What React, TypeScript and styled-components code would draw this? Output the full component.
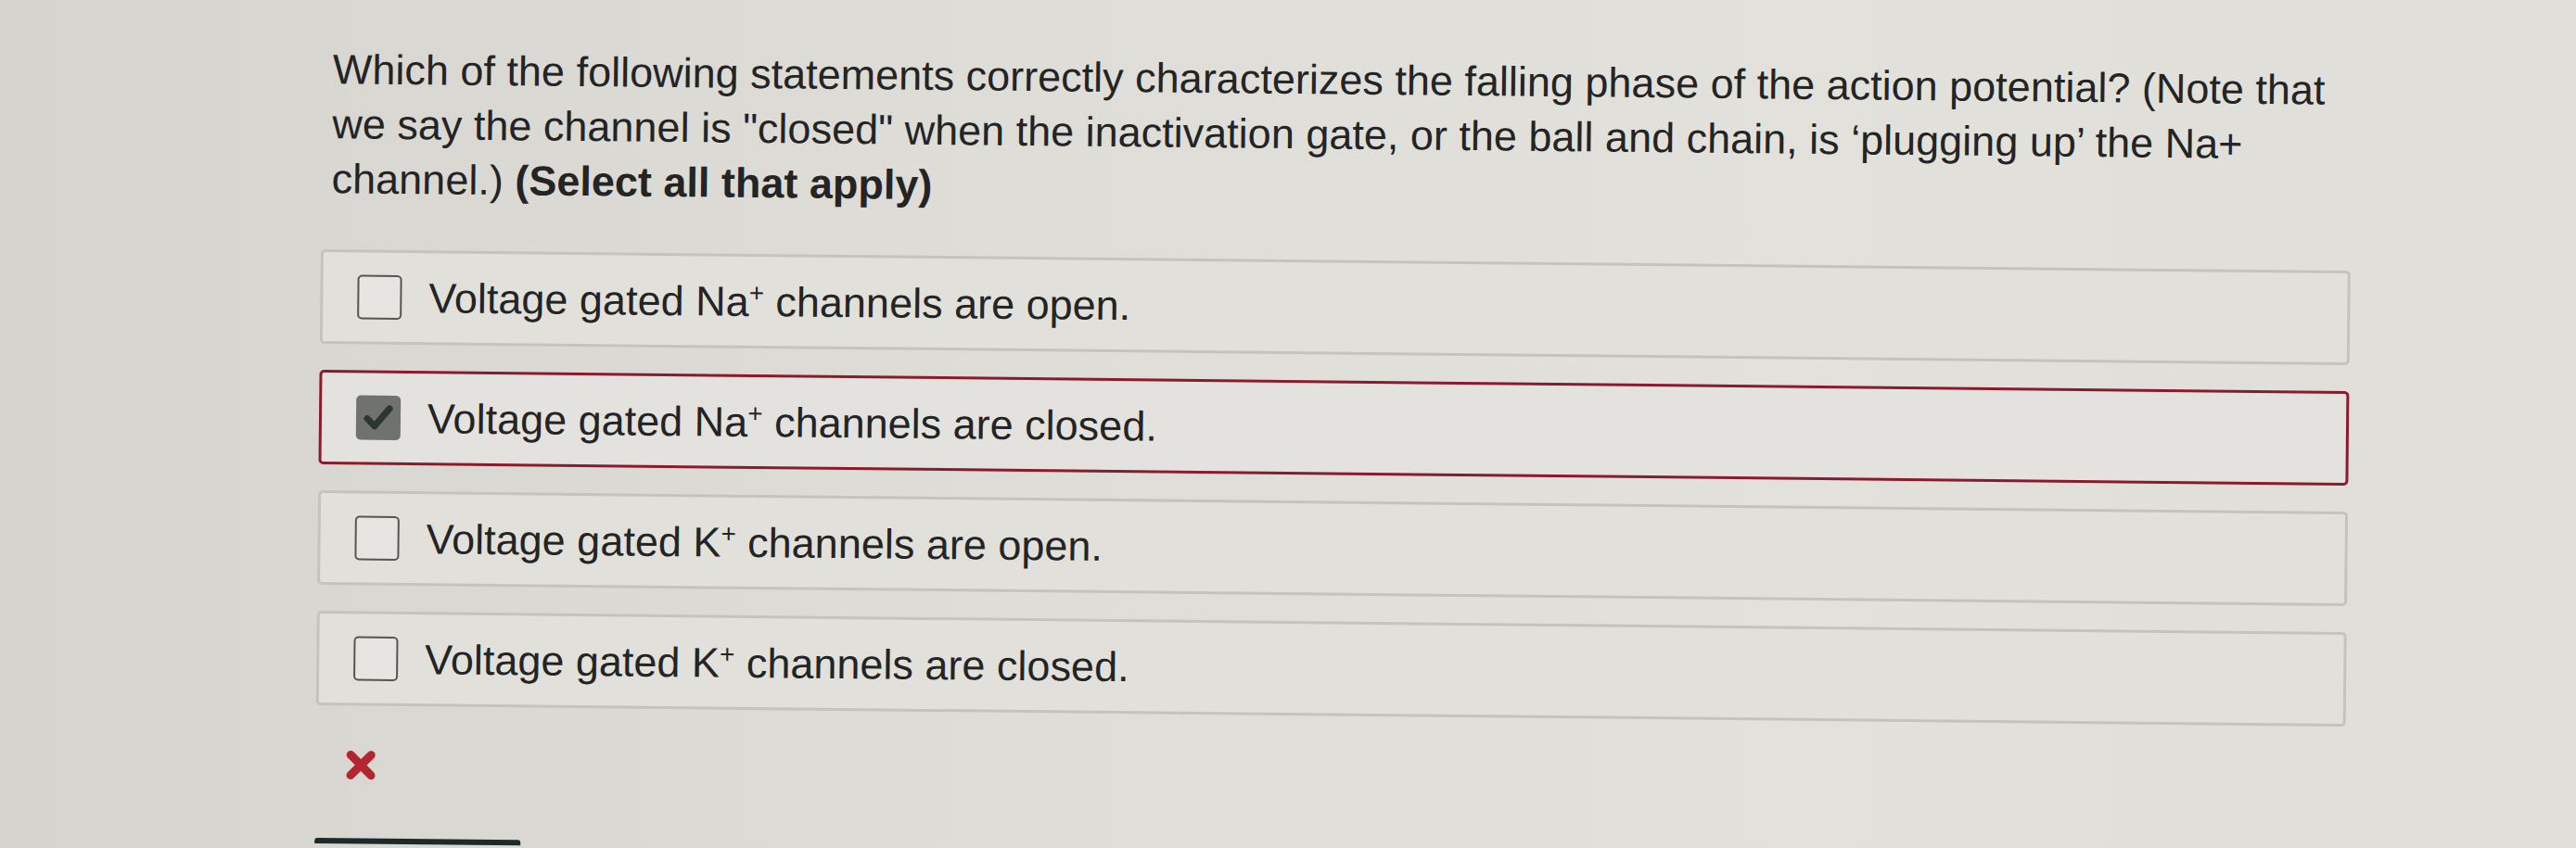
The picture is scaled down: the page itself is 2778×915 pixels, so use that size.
import React from 'react'
import styled, { createGlobalStyle } from 'styled-components'

const GlobalStyle = createGlobalStyle`
  html, body {
    margin: 0;
    padding: 0;
    width: 2778px;
    height: 915px;
    overflow: hidden;
    background: linear-gradient(90deg, #d5d4cf 0%, #dddcd7 35%, #e2e1dc 70%, #dfded9 100%);
  }
  * {
    box-sizing: border-box;
  }
`

const Page = styled.div`
  width: 2778px;
  height: 915px;
  padding: 56px 245px 0 344px;
  font-family: 'Liberation Sans', Arial, sans-serif;
  color: #242424;
  transform: rotate(0.6deg);
  transform-origin: 1389px 457px;
`

const Question = styled.div`
  font-size: 45px;
  line-height: 59px;
  padding-left: 11px;
  margin-bottom: 47px;

  b {
    font-weight: 700;
  }
`

const OptionList = styled.div`
  display: flex;
  flex-direction: column;
  gap: 28px;
`

const Option = styled.div<{ selected?: boolean }>`
  height: 102px;
  display: flex;
  align-items: center;
  gap: 29px;
  padding-left: 37px;
  border: 3px solid ${({ selected }) => (selected ? '#8a1b2d' : '#c4c3be')};
  border-radius: 5px;
  background: ${({ selected }) => (selected ? '#e3e2de' : '#e1e0db')};
`

const Check = styled.div<{ checked?: boolean }>`
  width: 48px;
  height: 48px;
  flex-shrink: 0;
  border-radius: 5px;
  border: ${({ checked }) => (checked ? 'none' : '2px solid #555553')};
  background: ${({ checked }) => (checked ? '#6f726f' : '#e6e5e1')};
  display: flex;
  align-items: center;
  justify-content: center;
`

const Label = styled.span`
  font-size: 45px;
  line-height: 1;

  sup {
    font-size: 0.62em;
    line-height: 0;
    vertical-align: 0.55em;
  }
`

const Feedback = styled.div`
  margin: 46px 0 0 31px;
  width: 36px;
  height: 36px;
`

// only the top edge of the submit button peeks in at the bottom of the frame
const ActionBar = styled.div`
  margin-top: 61px;
  width: 222px;
  height: 6px;
  border-radius: 3px 3px 0 0;
  background: #1d292b;
`

const options = [
  { ion: 'Na', text: 'channels are open.', checked: false },
  { ion: 'Na', text: 'channels are closed.', checked: true },
  { ion: 'K', text: 'channels are open.', checked: false },
  { ion: 'K', text: 'channels are closed.', checked: false },
]

const App: React.FC = () => {
  return (
    <>
      <GlobalStyle />
      <Page>
        <Question>
          Which of the following statements correctly characterizes the falling phase of the action potential? (Note
          that we say the channel is "closed" when the inactivation gate, or the ball and chain, is ‘plugging up’ the
          Na+ channel.) <b>(Select all that apply)</b>
        </Question>
        <OptionList>
          {options.map((o, i) => (
            <Option key={i} selected={o.checked}>
              <Check checked={o.checked}>
                {o.checked && (
                  <svg width="40" height="40" viewBox="0 0 40 40">
                    <path
                      d="M8 21 L16 29 L32 10"
                      fill="none"
                      stroke="#2c3631"
                      strokeWidth="7"
                      strokeLinecap="round"
                      strokeLinejoin="round"
                    />
                  </svg>
                )}
              </Check>
              <Label>
                Voltage gated {o.ion}
                <sup>+</sup> {o.text}
              </Label>
            </Option>
          ))}
        </OptionList>
        <Feedback>
          <svg width="36" height="36" viewBox="0 0 36 36">
            <path d="M7 7 L29 29 M29 7 L7 29" stroke="#b3252f" strokeWidth="9" strokeLinecap="round" />
          </svg>
        </Feedback>
        <ActionBar />
      </Page>
    </>
  )
}

export default App
